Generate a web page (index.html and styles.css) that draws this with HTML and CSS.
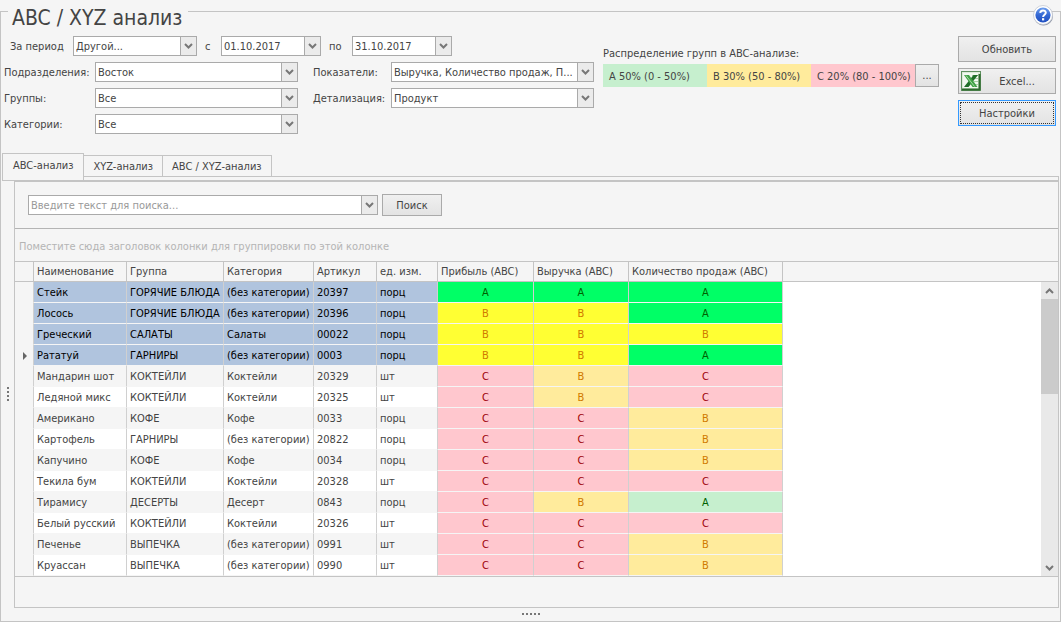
FILE: index.html
```
<!DOCTYPE html>
<html lang="ru">
<head>
    <meta charset="UTF-8">
    <title>ABC / XYZ анализ</title>
    <link rel="stylesheet" href="styles.css">
</head>
<body>
    <main class="frame">
        <button class="help" type="button" aria-label="Справка">
            <svg width="22" height="22" viewBox="0 0 22 22">
                <defs>
                    <linearGradient id="ball" x1="0" y1="0" x2="0" y2="1">
                        <stop offset="0" stop-color="#6fa0ee"/>
                        <stop offset="0.5" stop-color="#3468d4"/>
                        <stop offset="1" stop-color="#1f4fc0"/>
                    </linearGradient>
                </defs>
                <circle cx="11.5" cy="12" r="9.5" fill="#8f96a6"/>
                <circle cx="11" cy="11" r="9.5" fill="#fff" stroke="#c3c8d2" stroke-width="0.8"/>
                <circle cx="11" cy="11" r="7.6" fill="url(#ball)"/>
                <path d="M8.2 8.9C8.3 5.6 13.8 5.6 13.8 8.8C13.8 10.7 11.1 10.7 11.1 13" fill="none" stroke="#fff" stroke-width="2"/>
                <rect x="10" y="14.2" width="2.2" height="2.2" fill="#fff"/>
            </svg>
        </button>
        <h1>ABC / XYZ анализ</h1>

        <div class="top">
            <div class="filters">
                <div class="period">
                    <label class="period-label" for="period">За период</label>
                    <select id="period" class="period-type"><option>Другой...</option></select>
                    <label class="from-label" for="from">с</label>
                    <select id="from" class="date"><option>01.10.2017</option></select>
                    <label class="to-label" for="to">по</label>
                    <select id="to" class="date"><option>31.10.2017</option></select>
                </div>
                <div class="fields">
                    <label for="departments">Подразделения:</label>
                    <select id="departments"><option>Восток</option></select>
                    <label class="second" for="measures">Показатели:</label>
                    <select id="measures"><option>Выручка, Количество продаж, П...</option></select>
                    <label for="groups">Группы:</label>
                    <select id="groups"><option>Все</option></select>
                    <label class="second" for="detail">Детализация:</label>
                    <select id="detail"><option>Продукт</option></select>
                    <label for="categories">Категории:</label>
                    <select id="categories"><option>Все</option></select>
                </div>
            </div>

            <div class="shares">
                <div class="shares-title">Распределение групп в ABC-анализе:</div>
                <div class="shares-row">
                    <span class="share a">A 50% (0 - 50%)</span>
                    <span class="share b">B 30% (50 - 80%)</span>
                    <span class="share c">C 20% (80 - 100%)</span>
                    <button class="more" type="button">...</button>
                </div>
            </div>

            <div class="actions">
                <button type="button">Обновить</button>
                <button type="button" class="excel">
                    <svg width="20" height="20" viewBox="0 0 20 20">
                        <rect x="0.5" y="0.5" width="19" height="19" fill="#dcebd8" stroke="#5f8f5f"/>
                        <path d="M1 18.500H19M18.500 3V19" stroke="#2d6b2d" stroke-width="2"/>
                        <rect x="2" y="2" width="15" height="15" fill="#f2f8f0"/>
                        <path d="M11 4.500H17M12 7.500H17M13 10.500H17M12 13.500H17" stroke="#a9cfa6"/>
                        <path d="M12.500 4H17L7.500 16H3Z" fill="#1f6e28"/>
                        <path d="M3 4H8L16.500 16H11.500Z" fill="#3fa045"/>
                        <path d="M5 4.500L13.500 15.500" stroke="#a5dba2"/>
                    </svg>
                    <span>Excel...</span>
                </button>
                <button type="button" class="focused">Настройки</button>
            </div>
        </div>

        <div class="tabs" role="tablist">
            <button type="button" role="tab" class="tab active" aria-selected="true">ABC-анализ</button>
            <button type="button" role="tab" class="tab">XYZ-анализ</button>
            <button type="button" role="tab" class="tab">ABC / XYZ-анализ</button>
            <div class="tabs-rest"></div>
        </div>

        <div class="page">
            <div class="side"><div class="dots vertical"><i></i><i></i><i></i><i></i></div></div>
            <section class="panel">
                <form class="search" onsubmit="event.preventDefault();">
                    <div class="search-box">
                        <input type="text" placeholder="Введите текст для поиска..." aria-label="Поиск">
                        <button type="button" class="drop" aria-label="История поиска"></button>
                    </div>
                    <button type="submit" class="find">Поиск</button>
                </form>
                <div class="group-hint">Поместите сюда заголовок колонки для группировки по этой колонке</div>
                <div class="grid">
                    <table>
                        <colgroup>
                            <col class="w-mark"><col class="w-name"><col class="w-group"><col class="w-cat"><col class="w-code"><col class="w-unit"><col class="w-profit"><col class="w-sales"><col class="w-count"><col>
                        </colgroup>
                        <thead>
                            <tr><th></th><th>Наименование</th><th>Группа</th><th>Категория</th><th>Артикул</th><th>ед. изм.</th><th>Прибыль (ABC)</th><th>Выручка (ABC)</th><th>Количество продаж (ABC)</th><th></th></tr>
                        </thead>
                        <tbody>
                            <tr class="selected"><td></td><td>Стейк</td><td>ГОРЯЧИЕ БЛЮДА</td><td>(без категории)</td><td>20397</td><td>порц</td><td class="a">A</td><td class="a">A</td><td class="a">A</td><td></td></tr>
                            <tr class="selected"><td></td><td>Лосось</td><td>ГОРЯЧИЕ БЛЮДА</td><td>(без категории)</td><td>20396</td><td>порц</td><td class="b">B</td><td class="b">B</td><td class="a">A</td><td></td></tr>
                            <tr class="selected"><td></td><td>Греческий</td><td>САЛАТЫ</td><td>Салаты</td><td>00022</td><td>порц</td><td class="b">B</td><td class="b">B</td><td class="b">B</td><td></td></tr>
                            <tr class="selected current"><td></td><td>Рататуй</td><td>ГАРНИРЫ</td><td>(без категории)</td><td>0003</td><td>порц</td><td class="b">B</td><td class="b">B</td><td class="a">A</td><td></td></tr>
                            <tr><td></td><td>Мандарин шот</td><td>КОКТЕЙЛИ</td><td>Коктейли</td><td>20329</td><td>шт</td><td class="c">C</td><td class="b">B</td><td class="c">C</td><td></td></tr>
                            <tr><td></td><td>Ледяной микс</td><td>КОКТЕЙЛИ</td><td>Коктейли</td><td>20325</td><td>шт</td><td class="c">C</td><td class="b">B</td><td class="c">C</td><td></td></tr>
                            <tr><td></td><td>Американо</td><td>КОФЕ</td><td>Кофе</td><td>0033</td><td>порц</td><td class="c">C</td><td class="c">C</td><td class="b">B</td><td></td></tr>
                            <tr><td></td><td>Картофель</td><td>ГАРНИРЫ</td><td>(без категории)</td><td>20822</td><td>порц</td><td class="c">C</td><td class="c">C</td><td class="b">B</td><td></td></tr>
                            <tr><td></td><td>Капучино</td><td>КОФЕ</td><td>Кофе</td><td>0034</td><td>порц</td><td class="c">C</td><td class="c">C</td><td class="b">B</td><td></td></tr>
                            <tr><td></td><td>Текила бум</td><td>КОКТЕЙЛИ</td><td>Коктейли</td><td>20328</td><td>шт</td><td class="c">C</td><td class="c">C</td><td class="c">C</td><td></td></tr>
                            <tr><td></td><td>Тирамису</td><td>ДЕСЕРТЫ</td><td>Десерт</td><td>0843</td><td>порц</td><td class="c">C</td><td class="b">B</td><td class="a">A</td><td></td></tr>
                            <tr><td></td><td>Белый русский</td><td>КОКТЕЙЛИ</td><td>Коктейли</td><td>20326</td><td>шт</td><td class="c">C</td><td class="c">C</td><td class="c">C</td><td></td></tr>
                            <tr><td></td><td>Печенье</td><td>ВЫПЕЧКА</td><td>(без категории)</td><td>0991</td><td>шт</td><td class="c">C</td><td class="c">C</td><td class="b">B</td><td></td></tr>
                            <tr><td></td><td>Круассан</td><td>ВЫПЕЧКА</td><td>(без категории)</td><td>0990</td><td>шт</td><td class="c">C</td><td class="c">C</td><td class="b">B</td><td></td></tr>
                        </tbody>
                    </table>
                    <div class="scrollbar">
                        <svg width="17" height="17"><path d="M5 11L8.500 7.500L12 11" fill="none" stroke="#777" stroke-width="2"/></svg>
                        <div class="thumb"></div>
                        <svg class="down" width="17" height="17"><path d="M5 7L8.500 10.500L12 7" fill="none" stroke="#777" stroke-width="2"/></svg>
                    </div>
                </div>
            </section>
        </div>
        <div class="bottom"><div class="dots"><i></i><i></i><i></i><i></i><i></i></div></div>
    </main>
</body>
</html>
```
FILE: styles.css
```
* {
    box-sizing: border-box;
}
body {
    margin: 0;
    min-height: 100vh;
    display: flex;
    flex-direction: column;
    padding-top: 11px;
    background: #f5f5f5;
    color: #444;
    font: 11px/14px "DejaVu Sans Condensed", "Noto Sans", sans-serif;
}
button, input, select {
    font: inherit;
    color: inherit;
    margin: 0;
    border-radius: 0;
}
button {
    padding: 1px 0 0;
    border: 1px solid #aaa;
    background: linear-gradient(#f0f0f0, #e3e3e3);
}
.frame {
    flex: 1;
    display: flex;
    flex-direction: column;
    position: relative;
    border: 1px solid #c4c4c4;
}
.help {
    position: absolute;
    top: -8px;
    right: 6px;
    width: 22px;
    height: 22px;
    padding: 0;
    border: none;
    background: none;
}
h1 {
    align-self: flex-start;
    margin: -8px 0 0 7px;
    padding: 0 6px 0 4px;
    background: #f5f5f5;
    font-size: 21px;
    line-height: 28px;
    font-weight: normal;
}

/* filters */
.top {
    display: flex;
    align-items: flex-start;
    padding: 4px 4px 0 3px;
}
.period {
    display: flex;
    align-items: center;
    padding-left: 6px;
    margin-bottom: 6px;
}
.period-label {
    width: 63px;
}
.from-label {
    width: 24px;
    padding-left: 8px;
}
.to-label {
    width: 31px;
    padding-left: 8px;
}
select {
    appearance: none;
    width: 100%;
    height: 20px;
    padding: 1px 18px 0 2px;
    border: 1px solid #aaa;
    background: #fff url("data:image/svg+xml,%3Csvg xmlns='http://www.w3.org/2000/svg' width='16' height='18'%3E%3Crect width='16' height='18' fill='%23ebebeb'/%3E%3Cpath d='M.5 0V18' stroke='%23aaa'/%3E%3Cpath d='M5 7l3.500 3.500L12 7' fill='none' stroke='%23777' stroke-width='2'/%3E%3C/svg%3E") no-repeat right center;
}
.period-type {
    width: 124px;
}
.date {
    width: 100px;
}
.fields {
    display: grid;
    grid-template-columns: 91px 203px 93px 203px;
    gap: 6px 0;
    align-items: center;
}
.fields label, .period label {
    padding-top: 1px;
}
.fields .second {
    padding-left: 15px;
}
.shares {
    margin: 11px 0 0 9px;
}
.shares-row {
    display: flex;
    margin-top: 3px;
}
.share {
    width: 104px;
    height: 23px;
    padding-left: 6px;
    line-height: 25px;
    white-space: nowrap;
}
.share.a {
    background: #c6efce;
}
.share.b {
    background: #ffeb9c;
}
.share.c {
    background: #ffc7ce;
}
.more {
    width: 24px;
}
.actions {
    display: flex;
    flex-direction: column;
    gap: 6px;
    width: 98px;
    margin-left: auto;
}
.actions button {
    height: 26px;
}
.actions .excel {
    display: flex;
    align-items: center;
    padding: 0 2px;
}
.excel span {
    flex: 1;
    padding-top: 1px;
}
.actions .focused {
    border-color: #3399ff;
    outline: 1px dotted #333;
    outline-offset: -3px;
}

/* tabs */
.tabs {
    display: flex;
    align-items: flex-start;
    margin: 19px 1px 0 1px;
}
.tab {
    height: 22px;
    margin: 2px 0 0 -1px;
    padding: 1px 9px 0;
    border-color: #c4c4c4;
    background: #f5f5f5;
}
.tab.active {
    height: 28px;
    margin: 0;
    padding: 0 10px 3px;
}
.tabs-rest {
    flex: 1;
    height: 5px;
    margin-top: 23px;
    border: solid #c4c4c4;
    border-width: 1px 1px 0 0;
}

/* page */
.page {
    flex: 1;
    display: flex;
    margin: -1px 1px 0 0;
}
.side {
    width: 13px;
    display: flex;
    align-items: center;
    justify-content: center;
}
.panel {
    flex: 1;
    border: 1px solid #c4c4c4;
    border-top-width: 2px;
}
.search {
    display: flex;
    align-items: center;
    gap: 4px;
    padding: 12px 13px;
    border-bottom: 1px solid #b4b4b4;
}
.search-box {
    display: flex;
    width: 350px;
    height: 20px;
    border: 1px solid #aaa;
    background: #fff;
}
.search-box input {
    flex: 1;
    padding: 1px 2px 0;
    border: none;
    background: none;
}
.search-box input::placeholder {
    color: #999;
}
.drop {
    width: 16px;
    border: none;
    background: url("data:image/svg+xml,%3Csvg xmlns='http://www.w3.org/2000/svg' width='16' height='18'%3E%3Crect width='16' height='18' fill='%23ebebeb'/%3E%3Cpath d='M.5 0V18' stroke='%23aaa'/%3E%3Cpath d='M5 7l3.500 3.500L12 7' fill='none' stroke='%23777' stroke-width='2'/%3E%3C/svg%3E") no-repeat;
}
.find {
    width: 60px;
    height: 22px;
}
.group-hint {
    padding: 11px 4px 7px;
    color: #b4b4b4;
}
.grid {
    position: relative;
    border: solid #c4c4c4;
    border-width: 1px 0;
}
table {
    width: 100%;
    table-layout: fixed;
    border-collapse: separate;
    border-spacing: 0;
    background: #fff;
}
.w-mark { width: 19px; }
.w-name { width: 93px; }
.w-group { width: 97px; }
.w-cat { width: 90px; }
.w-code { width: 63px; }
.w-unit { width: 61px; }
.w-profit { width: 96px; }
.w-sales { width: 95px; }
.w-count { width: 154px; }
th, td {
    padding: 0 3px;
    border-right: 1px solid #d0d0d0;
    white-space: nowrap;
    text-align: left;
}
th {
    height: 20px;
    border-right-color: #c4c4c4;
    border-bottom: 1px solid #c4c4c4;
    background: #f5f5f5;
    font-weight: normal;
}
td {
    height: 21px;
    padding-top: 2px;
    border-bottom: 1px solid #f5f5f5;
}
th:last-child, td:last-child {
    border-right: none;
}
tbody tr:nth-child(odd) td {
    background: #f5f5f5;
}
tbody tr.selected td {
    background: #b0c4de;
    color: #000;
}
tbody tr td:first-child {
    background: #f5f5f5;
}
tbody tr.selected td:first-child {
    background: #f5f5f5;
}
.current td:first-child::before {
    content: "";
    display: block;
    margin-left: 5px;
    width: 4px;
    border: solid transparent;
    border-width: 4px 0 4px 4px;
    border-left-color: #666;
}
tbody tr td:last-child, tbody tr:nth-child(odd) td:last-child, tbody tr.selected td:last-child {
    background: #fff;
    border-bottom-color: #fff;
}
td.a, td.b, td.c {
    text-align: center;
}
tbody tr td.a {
    background: #c6efce;
    color: #006100;
}
tbody tr td.b {
    background: #ffeb9c;
    color: #d07a00;
}
tbody tr td.c {
    background: #ffc7ce;
    color: #9c0006;
}
tbody tr:nth-child(odd) td.a { background: #c6efce; }
tbody tr:nth-child(odd) td.b { background: #ffeb9c; }
tbody tr:nth-child(odd) td.c { background: #ffc7ce; }
tbody tr.selected td.a {
    background: #00ff66;
    color: #006100;
}
tbody tr.selected td.b {
    background: #ffff33;
    color: #d07a00;
}
.scrollbar {
    position: absolute;
    top: 20px;
    right: 0;
    bottom: 0;
    width: 17px;
    display: flex;
    flex-direction: column;
    background: #e9e9e9;
}
.thumb {
    height: 95px;
    background: #cbcbcb;
}
.down {
    margin-top: auto;
}

/* splitter handles */
.dots {
    display: flex;
    gap: 2px;
}
.dots.vertical {
    flex-direction: column;
}
.dots i {
    width: 2px;
    height: 2px;
    background: #777;
}
.bottom {
    display: flex;
    justify-content: center;
    padding: 5px 0 6px;
}
```
